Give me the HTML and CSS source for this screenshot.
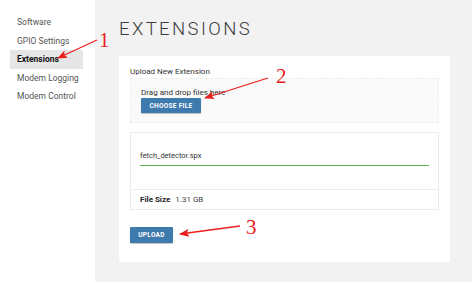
FILE: index.html
```html
<!DOCTYPE html>
<html>
<head>
<meta charset="utf-8">
<link rel="stylesheet" href="styles.css">
</head>
<body>
<div class="app">
  <nav class="sidebar">
    <div class="nav-item">Software</div>
    <div class="nav-item">GPIO Settings</div>
    <div class="nav-item active">Extensions</div>
    <div class="nav-item">Modem Logging</div>
    <div class="nav-item">Modem Control</div>
  </nav>
  <main class="main">
    <h1 class="title">EXTENSIONS</h1>
    <section class="card">
      <div class="label">Upload New Extension</div>
      <div class="dropzone">
        <div class="drop-text">Drag and drop files here</div>
        <button class="btn">CHOOSE FILE</button>
      </div>
      <div class="file-card">
        <div class="file-input">
          <div class="file-name">fetch_detector.spx</div>
          <div class="underline"></div>
        </div>
        <div class="file-size"><b>File Size</b> 1.31 GB</div>
      </div>
      <button class="btn upload">UPLOAD</button>
    </section>
  </main>
</div>
<svg class="annotations" width="474" height="283" viewBox="0 0 474 283">
  <defs>
    <marker id="ah" markerWidth="10" markerHeight="8" refX="9" refY="4" orient="auto" markerUnits="userSpaceOnUse">
      <path d="M0,0 L10,4 L0,8 L2,4 Z" fill="#e8201c"/>
    </marker>
  </defs>
  <line x1="97" y1="40" x2="58" y2="58" stroke="#e8201c" stroke-width="1.3" marker-end="url(#ah)"/>
  <line x1="268" y1="78" x2="205" y2="98" stroke="#e8201c" stroke-width="1.3" marker-end="url(#ah)"/>
  <line x1="240" y1="226" x2="180" y2="234" stroke="#e8201c" stroke-width="1.3" marker-end="url(#ah)"/>
  <text x="99" y="47" class="num">1</text>
  <text x="276" y="83" class="num">2</text>
  <text x="246" y="234" class="num">3</text>
</svg>
</body>
</html>
```
FILE: styles.css
```css
html, body {
  margin: 0;
  padding: 0;
  background: #ffffff;
  font-family: Roboto, "Liberation Sans", sans-serif;
}
.app {
  display: flex;
  width: 472px;
  height: 282px;
}
.sidebar {
  width: 95px;
  flex: none;
  padding-top: 13px;
  box-sizing: border-box;
}
.nav-item {
  font-size: 8.5px;
  color: #555;
  height: 18.5px;
  line-height: 18.5px;
  padding-left: 7px;
  margin-left: 10px;
  width: 66px;
}
.nav-item.active {
  background: #e6e6e6;
  color: #111;
  font-weight: bold;
}
.main {
  flex: 1;
  background: #f2f2f2;
  padding: 0 22px 0 24px;
}
.title {
  margin: 0;
  padding-top: 17px;
  height: 40px;
  box-sizing: border-box;
  font-size: 18.5px;
  font-weight: 300;
  letter-spacing: 2.4px;
  color: #3d3d3d;
  line-height: 24px;
}
.card {
  background: #fff;
  height: 206px;
  box-sizing: border-box;
  padding: 11px 11px 0 11px;
  margin-top: 16px;
}
.label {
  font-size: 8px;
  color: #333;
  line-height: 10px;
}
.dropzone {
  margin-top: 1px;
  height: 45px;
  box-sizing: border-box;
  border: 1px dashed #ededed;
  background: #fafafa;
  padding: 9px 10px 0 10px;
}
.drop-text {
  font-size: 8px;
  color: #333;
  line-height: 10px;
}
.btn {
  display: block;
  border: none;
  background: #3f7aae;
  color: #fff;
  font-family: Roboto, "Liberation Sans", sans-serif;
  font-weight: bold;
  font-size: 6.5px;
  letter-spacing: 0.3px;
  height: 15px;
  width: 60px;
  padding: 0;
  border-radius: 1px;
  box-shadow: 0 1px 1px rgba(0,0,0,0.25);
}
.file-card {
  margin-top: 9px;
  height: 78px;
  box-sizing: border-box;
  border: 1px solid #ececec;
}
.file-input {
  height: 57px;
  box-sizing: border-box;
  padding: 18px 9px 0 9px;
  border-bottom: 1px solid #ececec;
}
.file-name {
  font-size: 7.5px;
  color: #333;
  line-height: 10px;
}
.underline {
  margin-top: 4px;
  height: 1px;
  background: #5cb04f;
}
.file-size {
  font-size: 8px;
  color: #444;
  padding-left: 9px;
  line-height: 20px;
}
.file-size b {
  color: #222;
  margin-right: 3px;
}
.upload {
  margin-top: 17px;
  width: 43px;
  height: 16px;
}
.annotations {
  position: absolute;
  left: 0;
  top: 0;
  pointer-events: none;
}
.num {
  font-family: "Liberation Serif", serif;
  font-size: 21px;
  fill: #e8201c;
}
```
